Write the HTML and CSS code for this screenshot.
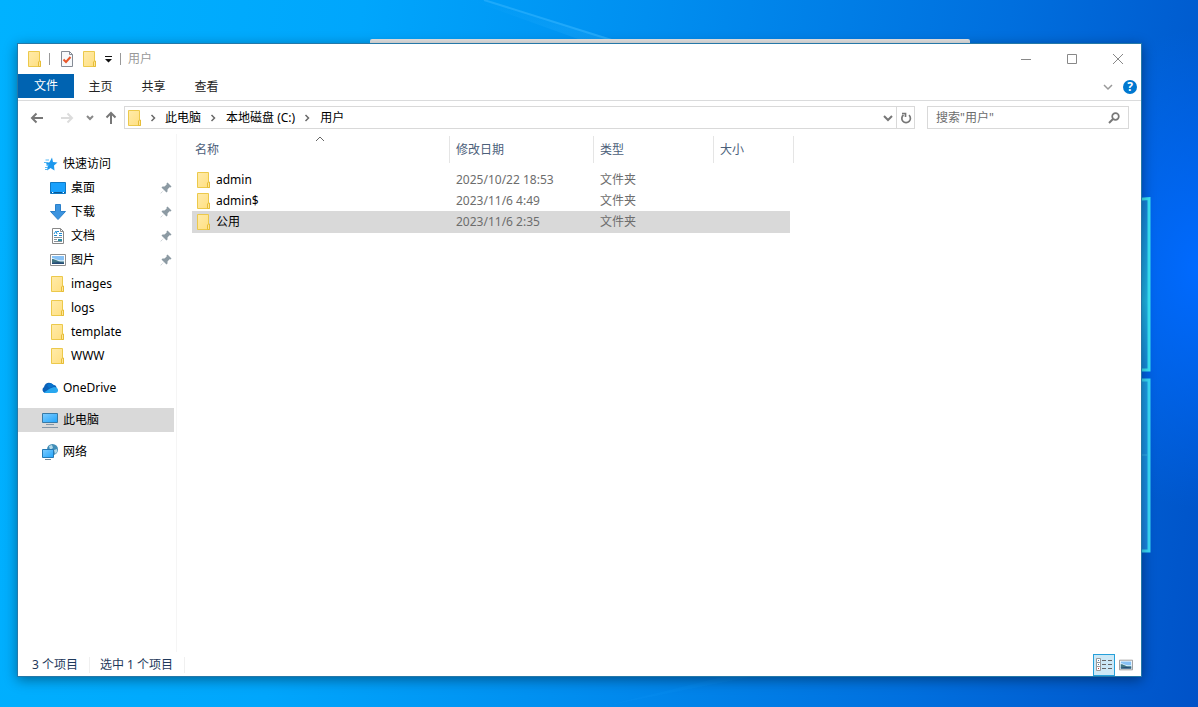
FILE: index.html
```html
<!DOCTYPE html>
<html lang="zh-CN">
<head>
    <meta charset="UTF-8">
    <meta name="viewport" content="width=device-width, initial-scale=1.0">
    <title>用户</title>
    <link rel="stylesheet" href="styles.css">
</head>
<body>
    <!-- shared icons -->
    <svg class="sprite" aria-hidden="true">
        <defs>
            <linearGradient id="folderFill" x1="0" y1="0" x2="1" y2="1">
                <stop offset="0" stop-color="#ffebaa"/>
                <stop offset="1" stop-color="#ffdf80"/>
            </linearGradient>
            <linearGradient id="blueFill" x1="0" y1="0" x2="1" y2="1">
                <stop offset="0" stop-color="#80cdff"/>
                <stop offset="1" stop-color="#20a4fb"/>
            </linearGradient>
            <linearGradient id="paneTop" x1="0" y1="0" x2="0" y2="1">
                <stop offset="0" stop-color="#1683dc"/>
                <stop offset="0.6" stop-color="#20b5e8"/>
                <stop offset="1" stop-color="#178cdf"/>
            </linearGradient>
            <linearGradient id="paneBottom" x1="0" y1="0" x2="0" y2="1">
                <stop offset="0" stop-color="#1c9ee8"/>
                <stop offset="1" stop-color="#1a86e4"/>
            </linearGradient>
            <linearGradient id="ray" x1="0" y1="0" x2="0" y2="1">
                <stop offset="0" stop-color="#38b7ff" stop-opacity="0"/>
                <stop offset="1" stop-color="#38b7ff"/>
            </linearGradient>
        </defs>
        <symbol id="folder" viewBox="0 0 16 16">
            <path d="M1.5.5h11v10h1v5h-12z" fill="url(#folderFill)" stroke="#ecc94b"/>
            <path d="M11.5 15v-4l1-1h1v5.5h-2z" fill="#ffe698" stroke="#e6bd38"/>
        </symbol>
        <symbol id="pin" viewBox="0 0 12 12">
            <path d="M7.5 0.500L11.500 4.500 10.500 5.500 9.500 5.300 7.500 7.500 7.500 9.500 6.500 10.500 4 8 1 11.300.500 11.500.700 11 4 8 1.500 5.500 2.500 4.500 4.500 4.500 6.700 2.500 6.500 1.500z" fill="#8c9aa3"/>
        </symbol>
        <symbol id="chevron" viewBox="0 0 8 8">
            <path d="M2.5 1l3 3-3 3" fill="none" stroke="#6a6a6a" stroke-width="1.5"/>
        </symbol>
        <symbol id="picture" viewBox="0 0 16 16">
            <path d="M.5 2.5h15v11H.5z" fill="#fff" stroke="#909090"/>
            <path d="M2 4h12v8H2z" fill="#87c1f5"/>
            <path d="M2 6c4 0 3 3 12 2v2H2z" fill="#d8effa"/>
            <path d="M2 7c4 0 5 3 12 2.5V12H2z" fill="#417584"/>
            <path d="M2 11c5-1 8-1 12 0v1H2z" fill="#254a76"/>
        </symbol>
    </svg>

    <svg class="wallpaper" viewBox="0 0 1198 707" preserveAspectRatio="xMaxYMid slice" aria-hidden="true">
        <path d="M470 0h18l140 44h-36z" fill="url(#ray)" opacity="0.25"/>
        <path d="M484 0L624 44" stroke="#38b7ff" stroke-width="2" opacity="0.5"/>
        <path d="M600 707L730 675 760 675z" fill="#169cf5" opacity="0.15"/>
        <path d="M1130 200l19-1.500V370h-19z" fill="url(#paneTop)" stroke="#3ae6f8" stroke-width="3"/>
        <path d="M1130 380h19v171h-19z" fill="url(#paneBottom)" stroke="#3adcfa" stroke-width="3"/>
        <path d="M1141 455h7" stroke="#36b5ee"/>
    </svg>

    <div class="behind"></div>

    <main class="window">
        <header class="titlebar">
            <svg class="icon"><use href="#folder"/></svg>
            <span class="bar"></span>
            <button class="tool" aria-label="属性">
                <svg class="icon" viewBox="0 0 16 16"><path d="M2.500.5h8l3 3v12h-11z" fill="#f7f9fb" stroke="#858b95"/><path d="M10.500.5v3h3" fill="none" stroke="#858b95"/><path d="M4.500 8.500l2.500 2.500L11.500 6" fill="none" stroke="#e8562a" stroke-width="2"/></svg>
            </button>
            <button class="tool" aria-label="新建文件夹"><svg class="icon"><use href="#folder"/></svg></button>
            <button class="tool more" aria-label="自定义快速访问工具栏">
                <svg width="8" height="8" viewBox="0 0 8 8"><path d="M0 1h7v1H0zM0 4h7L3.500 7.500z" fill="#111"/></svg>
            </button>
            <span class="bar"></span>
            <h1>用户</h1>
            <div class="controls">
                <button aria-label="最小化"><svg width="10" height="10"><path d="M0 5.500h10" stroke="#888"/></svg></button>
                <button aria-label="最大化"><svg width="10" height="10"><path d="M.5.5h9v9h-9z" fill="none" stroke="#888"/></svg></button>
                <button aria-label="关闭"><svg width="10" height="10"><path d="M0 0l10 10M10 0L0 10" stroke="#888"/></svg></button>
            </div>
        </header>

        <nav class="ribbon">
            <button class="file">文件</button>
            <button>主页</button>
            <button>共享</button>
            <button>查看</button>
            <div class="ribbon-right">
                <button aria-label="展开功能区"><svg width="10" height="8"><path d="M1 2l4 4 4-4" fill="none" stroke="#999" stroke-width="1.500"/></svg></button>
                <button class="help" aria-label="帮助">?</button>
            </div>
        </nav>

        <div class="location">
            <div class="history">
                <button aria-label="后退"><svg width="14" height="12"><path d="M13 6H2M6.500 1.500L2 6l4.500 4.500" fill="none" stroke="#777" stroke-width="2"/></svg></button>
                <button aria-label="前进"><svg width="14" height="12"><path d="M1 6h11M7.500 1.500L12 6l-4.500 4.500" fill="none" stroke="#dcdcdc" stroke-width="2"/></svg></button>
                <button class="recent" aria-label="最近浏览的位置"><svg width="8" height="6"><path d="M1 1l3 3 3-3" fill="none" stroke="#888" stroke-width="2"/></svg></button>
                <button class="up" aria-label="上移"><svg width="12" height="14"><path d="M6 13V2M1.500 6.500L6 2l4.500 4.500" fill="none" stroke="#777" stroke-width="2"/></svg></button>
            </div>
            <div class="address">
                <svg class="icon"><use href="#folder"/></svg>
                <svg class="chevron"><use href="#chevron"/></svg>
                <a href="#">此电脑</a>
                <svg class="chevron"><use href="#chevron"/></svg>
                <a href="#">本地磁盘 (C:)</a>
                <svg class="chevron"><use href="#chevron"/></svg>
                <a href="#">用户</a>
                <button class="drop" aria-label="以前的位置"><svg width="10" height="8"><path d="M1 2l4 4 4-4" fill="none" stroke="#777" stroke-width="2"/></svg></button>
                <button class="refresh" aria-label="刷新"><svg width="12" height="12"><path d="M3.500 3A4.300 4.300 0 1 0 9 3.200M2 1.500h3.500V5" fill="none" stroke="#777" stroke-width="1.700"/></svg></button>
            </div>
            <div class="search">
                <input type="text" placeholder='搜索"用户"' aria-label="搜索">
                <button aria-label="开始搜索"><svg width="12" height="12"><circle cx="7.500" cy="4.500" r="3.300" fill="none" stroke="#777" stroke-width="1.700"/><path d="M5 7L1 11" stroke="#777" stroke-width="2"/></svg></button>
            </div>
        </div>

        <div class="content">
            <aside class="sidebar">
                <section>
                    <a href="#" class="root">
                        <svg class="icon" viewBox="0 0 16 16"><path d="M10 1.500l1 4.500 4.500.5-3.500 3 .5 5-4-2.500L5 14.500l.8-4.500L4 7l3.500-.8z" fill="#1d98ed"/><path d="M3.500 4H7M2 6.500h4M4 9h3M3 11.500h3M3 13.500h2" stroke="#55b9f5"/></svg>
                        快速访问
                    </a>
                    <a href="#">
                        <svg class="icon" viewBox="0 0 16 16"><path d="M.5 2.500h15v11H.5z" fill="#19a1fd" stroke="#1079c4"/><path d="M1 12.500h2m1 0h8m1 0h2" stroke="#0b5793"/><path d="M2 12.500h1m10 0h1" stroke="#fff"/></svg>
                        桌面<svg class="pin"><use href="#pin"/></svg>
                    </a>
                    <a href="#">
                        <svg class="icon" viewBox="0 0 16 16"><path d="M5.500.5h5v7h5L8 15.500.5 7.500h5z" fill="#3c94df" stroke="#2b80ca"/></svg>
                        下载<svg class="pin"><use href="#pin"/></svg>
                    </a>
                    <a href="#">
                        <svg class="icon" viewBox="0 0 16 16"><path d="M2.500.5h8l3 3v12h-11z" fill="#fff" stroke="#888"/><path d="M10.500.5v3h3" fill="none" stroke="#888"/><path d="M7 3.500h2M4 7.500h3M9 5.500h3M9 7.500h3" stroke="#248bd0"/><path d="M4 6l2-3 1 3" fill="none" stroke="#2591d5"/><path d="M4 9.500h8M4 11.500h3M4 13.500h8" stroke="#89919a"/><path d="M8 11h4v2H8z" fill="#288fa8"/></svg>
                        文档<svg class="pin"><use href="#pin"/></svg>
                    </a>
                    <a href="#">
                        <svg class="icon"><use href="#picture"/></svg>
                        图片<svg class="pin"><use href="#pin"/></svg>
                    </a>
                    <a href="#"><svg class="icon"><use href="#folder"/></svg>images</a>
                    <a href="#"><svg class="icon"><use href="#folder"/></svg>logs</a>
                    <a href="#"><svg class="icon"><use href="#folder"/></svg>template</a>
                    <a href="#"><svg class="icon"><use href="#folder"/></svg>WWW</a>
                </section>
                <section>
                    <a href="#" class="root">
                        <svg class="icon" viewBox="0 0 16 16"><path d="M3 13A3.300 3.300 0 0 1 2 7c1-5 7-5.500 9-2 3 0 3.500 1.500 3.500 3L9 11z" fill="#0b61b9"/><path d="M5 5c3-3 7-1 7 1L7 8z" fill="#0873ce"/><path d="M2 12.500l6-4 4-1.500c5 0 5.500 6 1 6H3z" fill="#28a7ef"/></svg>
                        OneDrive
                    </a>
                </section>
                <section>
                    <a href="#" class="root selected">
                        <svg class="icon" viewBox="0 0 16 16"><path d="M.5 1.500h15v9H.5z" fill="url(#blueFill)" stroke="#387aa6"/><path d="M4 12.500h8M0 15.500h16" stroke="#8497a8"/></svg>
                        此电脑
                    </a>
                </section>
                <section>
                    <a href="#" class="root">
                        <svg class="icon" viewBox="0 0 16 16"><circle cx="10.500" cy="5.500" r="5.500" fill="#418db7"/><path d="M7 2l3-1 1 3-3 2zM12 6l3-1v3l-2 2z" fill="#b4d9e8"/><path d="M.5 5.500h11v8H.5z" fill="url(#blueFill)" stroke="#2479b5"/><path d="M3 15.500h6" stroke="#71899b"/></svg>
                        网络
                    </a>
                </section>
            </aside>

            <div class="files">
                <svg class="sort" width="10" height="6"><path d="M1 5l4-4 4 4" fill="none" stroke="#666"/></svg>
                <table>
                    <thead>
                        <tr>
                            <th class="name">名称</th>
                            <th class="date">修改日期</th>
                            <th class="type">类型</th>
                            <th class="size">大小</th>
                        </tr>
                    </thead>
                    <tbody>
                        <tr>
                            <td><span><svg class="icon"><use href="#folder"/></svg>admin</span></td>
                            <td>2025/10/22 18:53</td>
                            <td>文件夹</td>
                            <td></td>
                        </tr>
                        <tr>
                            <td><span><svg class="icon"><use href="#folder"/></svg>admin$</span></td>
                            <td>2023/11/6 4:49</td>
                            <td>文件夹</td>
                            <td></td>
                        </tr>
                        <tr class="selected">
                            <td><span><svg class="icon"><use href="#folder"/></svg>公用</span></td>
                            <td>2023/11/6 2:35</td>
                            <td>文件夹</td>
                            <td></td>
                        </tr>
                    </tbody>
                </table>
            </div>
        </div>

        <footer class="status">
            <span>3 个项目</span>
            <span>选中 1 个项目</span>
            <div class="views">
                <button class="active" aria-label="详细信息">
                    <svg width="16" height="14"><path d="M.5.5h4v4h-4zM.5 4.500h4v4h-4zM.5 8.500h4v4h-4z" fill="#fff" stroke="#999"/><path d="M2 2.500h1M2 6.500h1" stroke="#457eb5"/><path d="M2 10.500h1" stroke="#c33"/><path d="M6 2.500h4m2 0h4M6 6.500h4m2 0h4M6 10.500h4m2 0h4" stroke="#666"/></svg>
                </button>
                <button aria-label="大缩略图"><svg width="14" height="14"><use href="#picture"/></svg></button>
            </div>
        </footer>
    </main>
</body>
</html>
```

FILE: styles.css
```css
* {
    box-sizing: border-box;
}
body {
    margin: 0;
    min-height: 100vh;
    padding: 43px 56px 30px 17px;
    display: flex;
    position: relative;
    overflow: hidden;
    font-family: "Noto Sans", "Noto Sans CJK SC", sans-serif;
    font-size: 12px;
    line-height: 16px;
    color: #000;
    background:
        radial-gradient(ellipse 160px 240px at 100% 38%, #006aff, transparent),
        linear-gradient(98deg, #00b2ff 0%, #00a6fc 28%, #008ff0 50%, #006fde 78%, #0052c8 100%);
}
button {
    display: flex;
    align-items: center;
    justify-content: center;
    padding: 0;
    border: 0;
    background: none;
    color: inherit;
    font: inherit;
}
a {
    color: inherit;
    text-decoration: none;
}
svg {
    display: block;
    flex: none;
}
.sprite {
    position: absolute;
    width: 0;
    height: 0;
}
.wallpaper {
    position: absolute;
    inset: 0;
    width: 100%;
    height: 100%;
}
.icon {
    width: 16px;
    height: 16px;
}

/* edge of the window underneath */
.behind {
    position: absolute;
    top: 39px;
    left: 370px;
    right: 19%;
    height: 8px;
    border-radius: 2px 2px 0 0;
    background: #e6e6e6;
}
.window {
    position: relative;
    flex: 1;
    display: flex;
    flex-direction: column;
    min-width: 0;
    background: #fff;
    border: 1px solid #2578a8;
    box-shadow: 0 3px 12px rgba(0, 0, 0, 0.4);
}

/* title bar */
.titlebar {
    display: flex;
    align-items: center;
    height: 29px;
    padding-left: 9px;
}
.bar {
    width: 1px;
    height: 12px;
    margin: 0 7px 0 6px;
    background: #999;
}
.tool {
    width: 20px;
    height: 20px;
    margin-right: 3px;
}
.more {
    width: 12px;
    margin: 0;
}
.more + .bar {
    margin: 0 7px 0 5px;
}
h1 {
    margin: 0;
    font-size: 12px;
    font-weight: 400;
    color: #999;
}
.controls {
    display: flex;
    margin-left: auto;
}
.controls button {
    width: 46px;
    height: 29px;
}

/* ribbon tabs */
.ribbon {
    display: flex;
    height: 28px;
    padding-top: 1px;
    border-bottom: 1px solid #dadbdc;
    color: #222;
}
.ribbon > button {
    width: 53px;
    height: 25px;
}
.ribbon > .file {
    width: 56px;
    height: 24px;
    background: #0063b1;
    color: #fff;
}
.ribbon-right {
    display: flex;
    align-items: center;
    gap: 10px;
    margin-left: auto;
    padding-right: 4px;
}
.help {
    width: 14px;
    height: 14px;
    border-radius: 50%;
    background: #0078d0;
    color: #fff;
    font-weight: 700;
}

/* address and search */
.location {
    display: flex;
    padding: 5px 12px 5px 0;
}
.history {
    display: flex;
    align-items: center;
    width: 106px;
    padding-left: 4px;
}
.history button {
    width: 30px;
    height: 23px;
}
.history .recent {
    width: 16px;
}
.history .up {
    width: 25px;
}
.address,
.search {
    display: flex;
    align-items: center;
    height: 23px;
    border: 1px solid #d9d9d9;
}
.address {
    flex: 1;
    padding-left: 2px;
}
.chevron {
    width: 8px;
    height: 8px;
    margin: 0 9px 0 8px;
}
.address .icon + .chevron {
    margin: 0 8px 0 6px;
}
.address .drop {
    width: 16px;
    height: 21px;
    margin-left: auto;
}
.address .refresh {
    width: 18px;
    height: 21px;
    border-left: 1px solid #d9d9d9;
}
.search {
    width: 202px;
    margin-left: 12px;
    padding: 0 8px;
}
.search input {
    flex: 1;
    min-width: 0;
    padding: 0;
    border: 0;
    outline: 0;
    background: none;
    font: inherit;
}
.search input::placeholder {
    color: #6d6d6d;
}

/* navigation pane */
.content {
    flex: 1;
    display: flex;
}
.sidebar {
    width: 159px;
    padding: 18px 2px 0 0;
    border-right: 1px solid #f5f5f5;
}
.sidebar section {
    margin-bottom: 8px;
}
.sidebar a {
    display: flex;
    align-items: center;
    gap: 5px;
    height: 24px;
    padding: 0 2px 0 32px;
}
.sidebar .root {
    padding-left: 24px;
}
.sidebar .selected {
    background: #d9d9d9;
}
.pin {
    width: 12px;
    height: 12px;
    margin-left: auto;
}

/* file list */
.files {
    position: relative;
    flex: 1;
    padding: 2px 0 0 15px;
}
.sort {
    position: absolute;
    top: 2px;
    left: 138px;
}
table {
    table-layout: fixed;
    width: 602px;
    border-spacing: 0;
}
th {
    height: 27px;
    padding: 0 6px;
    border-right: 1px solid #e5e5e5;
    font-weight: 400;
    text-align: left;
    color: #4c607a;
}
.name {
    width: 258px;
    padding-left: 3px;
}
.date {
    width: 144px;
}
.type {
    width: 120px;
}
.size {
    width: 80px;
}
thead::after {
    content: "";
    display: block;
    height: 6px;
}
td {
    height: 21px;
    padding: 0 6px;
    color: #6d6d6d;
}
td:first-child {
    padding-left: 4px;
    color: #000;
}
td:last-child {
    border-right: 4px solid transparent;
    background-clip: padding-box;
}
td span {
    display: flex;
    align-items: center;
    gap: 4px;
}
tr.selected td {
    height: 22px;
    background-color: #d9d9d9;
}

/* status bar */
.status {
    display: flex;
    align-items: center;
    height: 24px;
    padding: 1px 4px 0;
    color: #1e395b;
}
.status span {
    padding: 0 11px 0 10px;
    border-right: 1px solid #f0f0f0;
}
.views {
    display: flex;
    margin-left: auto;
}
.views button {
    width: 22px;
    height: 22px;
}
.views .active {
    border: 1px solid #26a0da;
    background: #cce8f6;
}
```
